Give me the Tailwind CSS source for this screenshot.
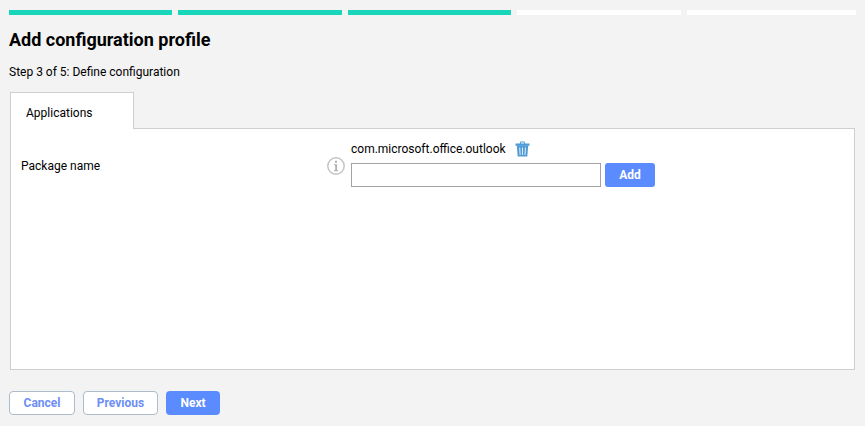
<!DOCTYPE html>
<html><head><meta charset="utf-8"><script src="https://cdn.jsdelivr.net/npm/@tailwindcss/browser@4"></script></head>
<body class="bg-[#f3f3f3] font-['Roboto',sans-serif] text-black">
<div class="w-[865px] h-[426px] overflow-hidden pt-[10px] pl-[9px] pr-[9px]">
  <div class="flex gap-[6px] h-[5px]">
    <div class="w-[163px] bg-[#17d6b9]"></div>
    <div class="w-[164px] bg-[#17d6b9]"></div>
    <div class="w-[163px] bg-[#17d6b9]"></div>
    <div class="w-[164px] bg-white"></div>
    <div class="w-[169px] bg-white"></div>
  </div>
  <h1 class="mt-[13px] h-[24px] text-[18px] leading-[24px] font-bold">Add configuration profile</h1>
  <p class="mt-[12px] h-[16px] text-[12px] leading-[16px]">Step 3 of 5: Define configuration</p>
  <div class="relative z-10 mt-[12px] ml-px w-[124px] h-[37px] bg-white border border-[#cfcfcf] border-b-0 pl-[15px] pt-[13px] text-[12px] leading-[15px]">Applications</div>
  <div class="-mt-px ml-px w-[845px] h-[242px] bg-white border border-[#cfcfcf] flex">
    <div class="w-[340px] flex justify-between items-start pl-[10px] pr-[6px] pt-[28px] text-[12px] leading-[18px]">
      <span>Package name</span>
      <svg width="18" height="18" viewBox="0 0 18 18"><circle cx="9" cy="9" r="8.200" fill="none" stroke="#c4c4c4" stroke-width="1.500"/><path d="M8 3.800h2v2H8zM7 7.200h3v6h1v1.100H7v-1.100h1.200V8.300H7z" fill="#b0b0b0"/></svg>
    </div>
    <div class="pt-[11px]">
      <div class="flex items-center h-[18px] text-[12px] leading-[18px]">
        <span>com.microsoft.office.outlook</span>
        <svg class="ml-[9px] -mt-px" width="15" height="16" viewBox="0 0 15 16"><path d="M0.500 2.500h14v2.200h-14zM4.800 2.500l.6-2h4.200l.6 2H9.200l-.3-1H6.100l-.3 1z" fill="#4f9bd5"/><path d="M1.800 4.500h11.400l-.9 11H2.700zM4.300 6.500l.4 7.500h.8l-.3-7.500zM7.100 6.500v7.500h.8V6.500zM9.900 6.500l-.3 7.500h.8l.4-7.500z" fill="#4f9bd5" fill-rule="evenodd"/></svg>
      </div>
      <div class="flex gap-[4px] mt-[5px]">
        <input class="w-[250px] h-[24px] bg-white border border-[#a3a3a3]" type="text">
        <button class="w-[50px] h-[24px] rounded-[3px] bg-[#5a8bff] text-white text-[12px] font-bold">Add</button>
      </div>
    </div>
  </div>
  <div class="flex mt-[21px]">
    <button class="w-[66px] h-[24px] rounded-[4px] bg-white border border-[#aebbc9] text-[#6d8ff5] text-[12px] font-bold">Cancel</button>
    <button class="ml-[8px] w-[75px] h-[24px] rounded-[4px] bg-white border border-[#aebbc9] text-[#6d8ff5] text-[12px] font-bold">Previous</button>
    <button class="ml-[8px] w-[54px] h-[24px] rounded-[4px] bg-[#5a8bff] text-white text-[12px] font-bold">Next</button>
  </div>
</div>
</body></html>
